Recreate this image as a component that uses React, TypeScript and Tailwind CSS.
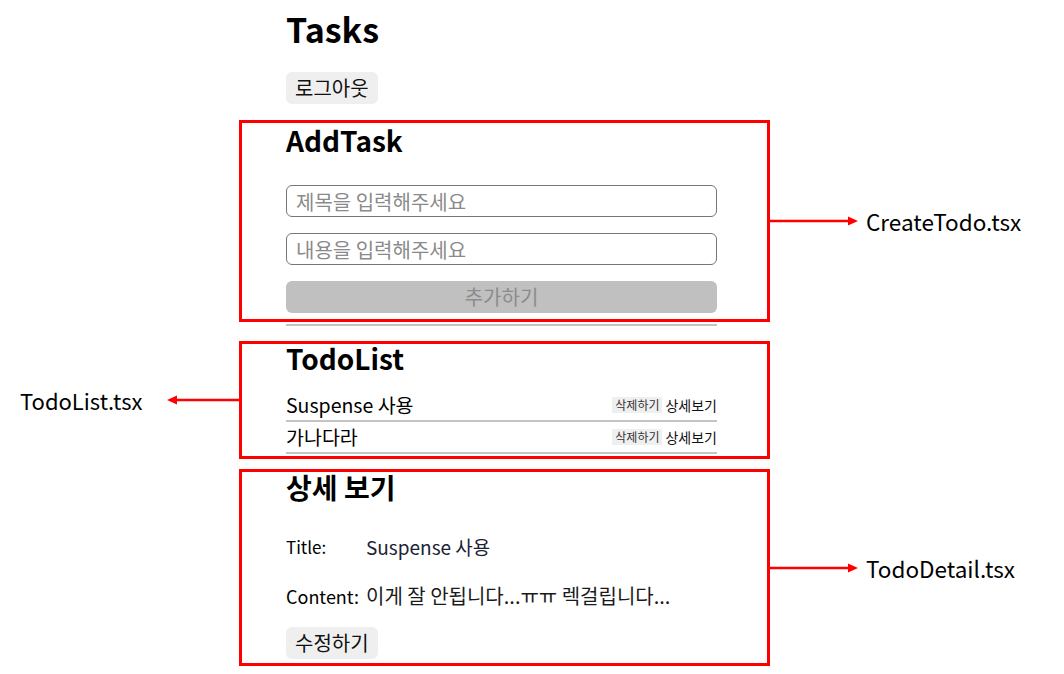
import React from "react";

const RightArrow = () => (
  <svg width="88" height="12" viewBox="0 0 88 12" className="shrink-0">
    <line x1="0" y1="6" x2="80" y2="6" stroke="#ff0000" strokeWidth="2.5" />
    <polygon points="78,1.5 88,6 78,10.5" fill="#ff0000" />
  </svg>
);

const LeftArrow = () => (
  <svg width="72" height="12" viewBox="0 0 72 12" className="shrink-0">
    <line x1="8" y1="6" x2="72" y2="6" stroke="#ff0000" strokeWidth="2.5" />
    <polygon points="10,1.5 0,6 10,10.5" fill="#ff0000" />
  </svg>
);

export default function App() {
  return (
    <div
      className="w-[1064px] h-[674px] bg-white text-black overflow-hidden"
      style={{ fontFamily: '"Noto Sans CJK KR", "Noto Sans", sans-serif' }}
    >
      {/* Header */}
      <div className="pl-[286px] pt-[7px]">
        <h1 className="text-[34px] leading-[44px] font-bold">Tasks</h1>
        <button className="mt-[21px] h-[32px] px-[9px] rounded-[6px] bg-[#efefef] text-[20px] leading-[32px] text-[#111]">
          로그아웃
        </button>
      </div>

      {/* CreateTodo */}
      <div className="mt-[16px] flex items-center">
        <div className="w-[239px] shrink-0" />
        <div className="w-[531px] h-[202px] shrink-0 border-[3px] border-[#ff0000] pl-[44px]">
          <div className="w-[431px]">
            <h2 className="text-[28px] leading-[34px] font-bold">AddTask</h2>
            <div className="mt-[28px] flex flex-col gap-[16px]">
              <input
                placeholder="제목을 입력해주세요"
                className="h-[32px] w-full border border-[#767676] rounded-[6px] px-[9px] text-[20px] placeholder:text-[#8a8a8a] outline-none"
              />
              <input
                placeholder="내용을 입력해주세요"
                className="h-[32px] w-full border border-[#767676] rounded-[6px] px-[9px] text-[20px] placeholder:text-[#8a8a8a] outline-none"
              />
              <button className="h-[32px] w-full rounded-[6px] bg-[#c0c0c0] text-[20px] text-[#8c8c8c]">
                추가하기
              </button>
            </div>
          </div>
        </div>
        <div className="flex items-center">
          <RightArrow />
          <span className="ml-[8px] text-[22.5px] leading-[28px]">CreateTodo.tsx</span>
        </div>
      </div>

      {/* separator */}
      <div className="pl-[286px] pt-[2px] h-[19px]">
        <div className="w-[431px] h-[2px] bg-[#c4c4c4]" />
      </div>

      {/* TodoList */}
      <div className="flex items-center">
        <div className="w-[239px] shrink-0 flex items-center justify-between pl-[20px]">
          <span className="text-[22px] leading-[28px]">TodoList.tsx</span>
          <LeftArrow />
        </div>
        <div className="w-[531px] h-[118px] shrink-0 border-[3px] border-[#ff0000] pl-[44px]">
          <div className="w-[431px]">
            <h2 className="text-[28px] leading-[30px] font-bold mt-[-1px]">TodoList</h2>
            <div className="mt-[17px]">
              {["Suspense 사용", "가나다라"].map((t) => (
                <div
                  key={t}
                  className="h-[32px] flex items-center justify-between border-b-2 border-[#c4c4c4]"
                >
                  <span className="text-[19.5px]">{t}</span>
                  <div className="flex items-center gap-[3px]">
                    <button className="bg-[#efefef] text-[12px] leading-[16px] px-[3px] text-[#333]">
                      삭제하기
                    </button>
                    <button className="text-[14px] leading-[16px] text-[#111]">상세보기</button>
                  </div>
                </div>
              ))}
            </div>
          </div>
        </div>
        <div className="flex-1" />
      </div>

      {/* TodoDetail */}
      <div className="mt-[10px] flex items-center">
        <div className="w-[239px] shrink-0" />
        <div className="w-[531px] h-[197px] shrink-0 border-[3px] border-[#ff0000] pl-[44px]">
          <div className="w-[431px]">
            <h2 className="text-[28px] leading-[32px] font-bold mt-[-1px]">상세 보기</h2>
            <div className="mt-[30px] flex items-center h-[28px]">
              <span className="w-[80px] text-[17px]">Title:</span>
              <span className="text-[19px] text-[#1a2233]">Suspense 사용</span>
            </div>
            <div className="mt-[21px] flex items-center h-[28px]">
              <span className="w-[80px] text-[18px]">Content:</span>
              <span className="text-[20px] text-[#1a1a1a]">이게 잘 안됩니다...ㅠㅠ 렉걸립니다...</span>
            </div>
            <button className="mt-[17px] h-[32px] px-[9px] rounded-[6px] bg-[#efefef] text-[20px] leading-[32px] text-[#111]">
              수정하기
            </button>
          </div>
        </div>
        <div className="flex items-center">
          <RightArrow />
          <span className="ml-[8px] text-[22.5px] leading-[28px]">TodoDetail.tsx</span>
        </div>
      </div>
    </div>
  );
}
